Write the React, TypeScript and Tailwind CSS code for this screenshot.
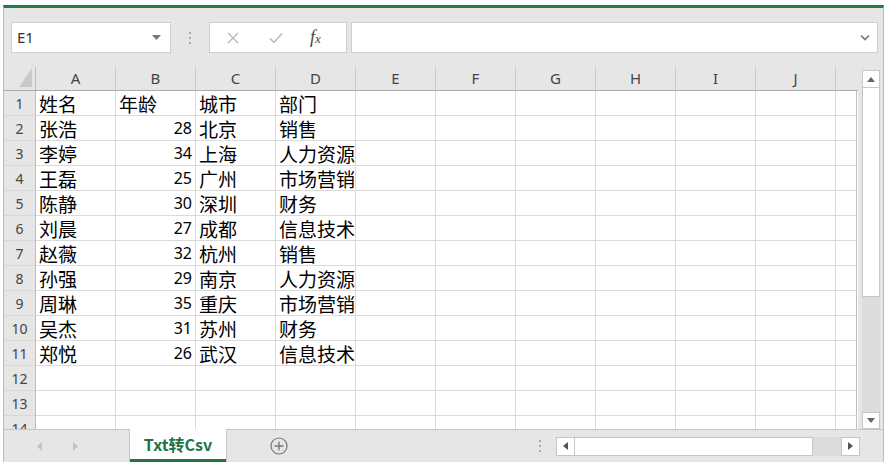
import React from "react";

const rows: (string | number)[][] = [
  ["姓名", "年龄", "城市", "部门"],
  ["张浩", 28, "北京", "销售"],
  ["李婷", 34, "上海", "人力资源"],
  ["王磊", 25, "广州", "市场营销"],
  ["陈静", 30, "深圳", "财务"],
  ["刘晨", 27, "成都", "信息技术"],
  ["赵薇", 32, "杭州", "销售"],
  ["孙强", 29, "南京", "人力资源"],
  ["周琳", 35, "重庆", "市场营销"],
  ["吴杰", 31, "苏州", "财务"],
  ["郑悦", 26, "武汉", "信息技术"],
];

const cols = ["A", "B", "C", "D", "E", "F", "G", "H", "I", "J"];
const ui = { fontFamily: '"Noto Sans", "Noto Sans CJK SC", sans-serif' };
const cjk = { fontFamily: '"Noto Sans CJK SC", "Noto Sans", sans-serif' };

function Row({ n, data }: { n: number; data?: (string | number)[] }) {
  return (
    <div className="flex h-[25px] shrink-0">
      <div
        className="w-[32px] shrink-0 border-r border-b border-r-[#bcbcbc] border-b-[#d8d8d8] bg-[#e6e6e6] flex items-center justify-center text-[14px] text-[#444]"
        style={ui}
      >
        {n}
      </div>
      {cols.map((c, i) => {
        const v = data ? data[i] : undefined;
        const isNum = typeof v === "number";
        return (
          <div
            key={c}
            className={`w-[80px] shrink-0 border-r border-b border-[#dadada] flex items-center overflow-visible whitespace-nowrap ${
              isNum ? "justify-end pr-[3px] text-[16px]" : "pl-[3px] text-[19px]"
            } text-black leading-none`}
            style={isNum ? ui : cjk}
          >
            {v !== undefined ? <span className="relative z-10">{v}</span> : null}
          </div>
        );
      })}
      <div className="w-[21px] shrink-0 border-r border-b border-r-[#bdbdbd] border-b-[#dadada]" />
    </div>
  );
}

export default function App() {
  return (
    <div className="w-[889px] h-[469px] bg-white overflow-hidden pt-[5px] pl-[3px]">
      <div className="w-[881px] h-[457px] border-t-[3px] border-t-[#237a47] border-x border-x-[#b9b9b9] bg-[#e6e6e6] flex flex-col">
        {/* formula bar */}
        <div className="h-[59px] shrink-0 flex items-start pt-[14px] pl-[7px]">
          <div className="w-[160px] h-[31px] bg-white border border-[#cfcfcf] flex items-center justify-between pl-[5px] pr-[9px]">
            <span className="text-[15px] text-[#333]" style={ui}>E1</span>
            <svg width="9" height="5" viewBox="0 0 9 5"><path d="M0 0h9L4.5 5z" fill="#777" /></svg>
          </div>
          <div className="w-[38px] h-[31px] flex items-center justify-center">
            <div className="flex flex-col gap-[3px]">
              <span className="w-[2px] h-[2px] bg-[#aaa]" />
              <span className="w-[2px] h-[2px] bg-[#aaa]" />
              <span className="w-[2px] h-[2px] bg-[#aaa]" />
            </div>
          </div>
          <div className="w-[138px] h-[31px] bg-white border border-[#cfcfcf] flex items-center">
            <svg className="ml-[17px]" width="12" height="12" viewBox="0 0 12 12"><path d="M1 1l10 10M11 1L1 11" stroke="#b5b5b5" strokeWidth="1.3" /></svg>
            <svg className="ml-[30px]" width="14" height="12" viewBox="0 0 14 12"><path d="M1 6.5l4 4L13 1.5" stroke="#b5b5b5" strokeWidth="1.4" fill="none" /></svg>
            <span className="ml-[27px] text-[18px] italic text-[#444]" style={{ fontFamily: '"Liberation Serif", serif' }}>
              f<span className="text-[13px]">x</span>
            </span>
          </div>
          <div className="ml-[4px] w-[527px] h-[31px] bg-white border border-[#cfcfcf] flex items-center justify-end pr-[7px]">
            <svg width="10" height="7" viewBox="0 0 10 7"><path d="M1 1.5l4 4 4-4" stroke="#777" strokeWidth="1.6" fill="none" /></svg>
          </div>
        </div>

        {/* grid area */}
        <div className="h-[362px] shrink-0 flex overflow-hidden">
          <div className="flex flex-col w-[854px] shrink-0 overflow-hidden bg-white">
            {/* header */}
            <div className="flex h-[24px] shrink-0 bg-[#e6e6e6] border-b border-[#ababab]">
              <div className="w-[32px] shrink-0 border-r border-[#bcbcbc] flex items-end justify-end pr-[3px] pb-[3px]">
                <svg width="13" height="19" viewBox="0 0 13 19"><path d="M13 0V19H0z" fill="#c9c9c9" /></svg>
              </div>
              {cols.map((c) => (
                <div key={c} className="w-[80px] shrink-0 border-r border-[#cacaca] flex items-center justify-center text-[15px] text-[#444]" style={ui}>
                  {c}
                </div>
              ))}
              <div className="w-[21px] shrink-0" />
            </div>
            {Array.from({ length: 14 }).map((_, i) => (
              <Row key={i} n={i + 1} data={rows[i]} />
            ))}
          </div>
          {/* vertical scrollbar */}
          <div className="w-[25px] shrink-0 flex flex-col pl-[4px] pt-[3px] bg-[#e6e6e6]">
            <div className="w-[18px] h-[18px] bg-white border border-[#c6c6c6] flex items-center justify-center">
              <svg width="8" height="5" viewBox="0 0 8 5"><path d="M0 5h8L4 0z" fill="#666" /></svg>
            </div>
            <div className="w-[18px] h-[324px] bg-[#dcdcdc] flex flex-col">
              <div className="h-[209px] bg-white border-x border-b border-[#c6c6c6]" />
            </div>
            <div className="w-[18px] h-[17px] bg-white border border-[#c6c6c6] flex items-center justify-center">
              <svg width="8" height="5" viewBox="0 0 8 5"><path d="M0 0h8L4 5z" fill="#666" /></svg>
            </div>
          </div>
        </div>

        {/* sheet tab bar */}
        <div className="h-[33px] shrink-0 flex items-stretch border-t border-[#c6c6c6]">
          <div className="w-[125px] flex items-center">
            <svg className="ml-[33px]" width="5" height="9" viewBox="0 0 5 9"><path d="M5 0v9L0 4.5z" fill="#c4c4c4" /></svg>
            <svg className="ml-[31px]" width="5" height="9" viewBox="0 0 5 9"><path d="M0 0v9l5-4.5z" fill="#c4c4c4" /></svg>
          </div>
          <div className="w-[98px] bg-white border-x border-[#c6c6c6] -mt-px flex flex-col">
            <div className="flex-1 flex items-center justify-center text-[16px] font-bold text-[#217346]" style={cjk}>
              Txt转Csv
            </div>
            <div className="h-[3px] bg-[#217346]" />
          </div>
          <div className="w-[103px] flex items-center justify-center">
            <svg width="18" height="18" viewBox="0 0 18 18">
              <circle cx="9" cy="9" r="8" stroke="#777" strokeWidth="1.2" fill="none" />
              <path d="M9 4.5v9M4.5 9h9" stroke="#777" strokeWidth="1.3" />
            </svg>
          </div>
          <div className="w-[200px]" />
          <div className="w-[20px] flex items-center justify-center">
            <div className="flex flex-col gap-[3px]">
              <span className="w-[2px] h-[2px] bg-[#aaa]" />
              <span className="w-[2px] h-[2px] bg-[#aaa]" />
              <span className="w-[2px] h-[2px] bg-[#aaa]" />
            </div>
          </div>
          <div className="ml-[6px] flex items-center">
            <div className="w-[19px] h-[19px] bg-white border border-[#c6c6c6] flex items-center justify-center">
              <svg width="5" height="8" viewBox="0 0 5 8"><path d="M5 0v8L0 4z" fill="#555" /></svg>
            </div>
            <div className="w-[238px] h-[19px] bg-white border-y border-r border-[#c6c6c6]" />
            <div className="w-[28px] h-[19px] bg-[#dcdcdc]" />
            <div className="w-[19px] h-[19px] bg-white border border-[#c6c6c6] flex items-center justify-center">
              <svg width="5" height="8" viewBox="0 0 5 8"><path d="M0 0v8l5-4z" fill="#555" /></svg>
            </div>
          </div>
        </div>
      </div>
    </div>
  );
}
